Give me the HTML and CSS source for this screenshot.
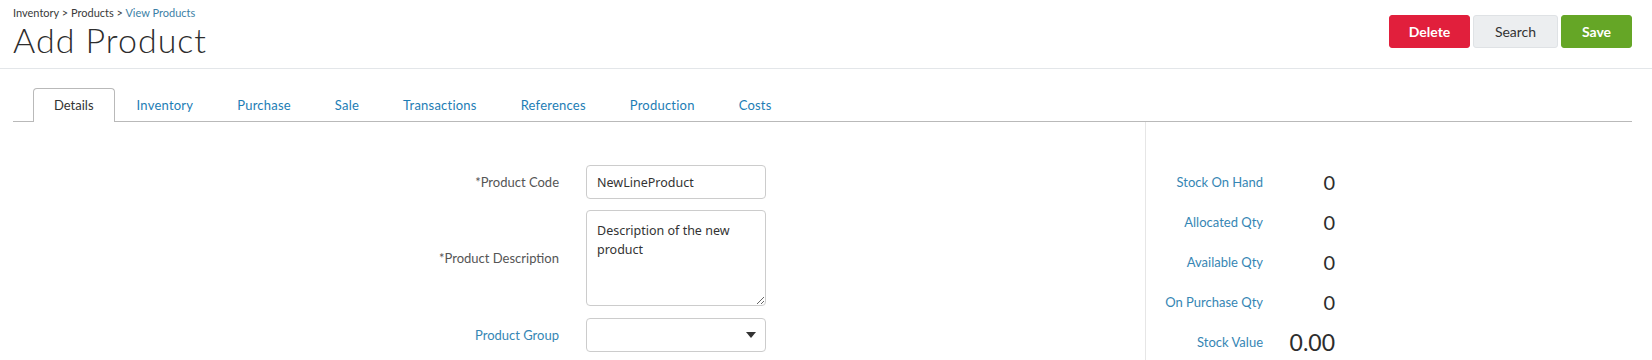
FILE: index.html
```html
<!DOCTYPE html>
<html lang="en">
<head>
<meta charset="utf-8">
<title>Add Product</title>
<link rel="stylesheet" href="styles.css">
</head>
<body>
<div class="page">
  <header class="topbar">
    <div class="titles">
      <nav class="crumbs"><span>Inventory</span> &gt; <span>Products</span> &gt; <a class="crumb-link">View Products</a></nav>
      <h1 class="title">Add Product</h1>
    </div>
    <div class="actions">
      <button class="btn btn-delete">Delete</button>
      <button class="btn btn-search">Search</button>
      <button class="btn btn-save">Save</button>
    </div>
  </header>

  <div class="content">
    <ul class="tabs">
      <li class="tab active"><a>Details</a></li>
      <li class="tab"><a>Inventory</a></li>
      <li class="tab"><a>Purchase</a></li>
      <li class="tab"><a>Sale</a></li>
      <li class="tab"><a>Transactions</a></li>
      <li class="tab"><a>References</a></li>
      <li class="tab"><a>Production</a></li>
      <li class="tab"><a>Costs</a></li>
    </ul>

    <div class="panes">
      <form class="details">
        <label class="flabel">*Product Code</label>
        <input class="field" type="text" value="NewLineProduct">

        <label class="flabel">*Product Description</label>
        <textarea class="field area">Description of the new product</textarea>

        <label class="flabel link">Product Group</label>
        <div class="select-wrap">
          <div class="field select"></div>
          <svg class="caret" width="10" height="6" viewBox="0 0 10 6"><path d="M0 0h10L5 6z" fill="#333"/></svg>
        </div>
      </form>

      <aside class="stock">
        <div class="slabel">Stock On Hand</div><div class="sval">0</div>
        <div class="slabel">Allocated Qty</div><div class="sval">0</div>
        <div class="slabel">Available Qty</div><div class="sval">0</div>
        <div class="slabel">On Purchase Qty</div><div class="sval">0</div>
        <div class="slabel">Stock Value</div><div class="sval big">0.00</div>
      </aside>
    </div>
  </div>
</div>
</body>
</html>
```

FILE: styles.css
```css
html, body {
  margin: 0;
  padding: 0;
  background: #fff;
}

body {
  font-family: "Lato", "Liberation Sans", sans-serif;
  color: #333;
}

.topbar {
  display: flex;
  justify-content: space-between;
  align-items: flex-start;
  height: 68px;
  padding: 0 20px 0 13px;
  border-bottom: 1px solid #e3e6e9;
}

.crumbs {
  padding-top: 5px;
  font-size: 11px;
  line-height: 15px;
  color: #3a3a3a;
}

.crumb-link {
  color: #3d7fa6;
}

.title {
  margin: 0;
  font-size: 34px;
  line-height: 40px;
  font-weight: 300;
  letter-spacing: 1px;
  color: #2d2d2d;
}

.actions {
  display: flex;
  gap: 3px;
  padding-top: 15px;
}

.btn {
  height: 33px;
  border: 1px solid transparent;
  border-radius: 3px;
  font-family: "Lato", "Liberation Sans", sans-serif;
  font-size: 14px;
  font-weight: 700;
  padding: 0;
  color: #fff;
}

.btn-delete {
  width: 81px;
  background: #e11f3c;
  border-color: #e11f3c;
}

.btn-search {
  width: 85px;
  background: #eceef0;
  border-color: #dfe2e5;
  color: #333;
  font-weight: 400;
}

.btn-save {
  width: 71px;
  background: #65a626;
  border-color: #65a626;
}

.content {
  margin: 0 20px 0 13px;
}

.tabs {
  display: flex;
  list-style: none;
  margin: 19px 0 0;
  padding: 0 0 0 20px;
  border-bottom: 1px solid #b9b9b9;
}

.tab a {
  display: block;
  padding: 0 21px;
  line-height: 33px;
  font-size: 13px;
  letter-spacing: 0.22px;
  color: #1d7db5;
  border: 1px solid transparent;
  border-bottom: 0;
  border-radius: 4px 4px 0 0;
  margin-bottom: -1px;
}

.tab.active a {
  color: #333;
  background: #fff;
  border-color: #b9b9b9;
  letter-spacing: 0;
  padding: 0 20px;
}

.panes {
  display: flex;
  min-height: 238px;
}

.details {
  flex: 1;
  display: grid;
  grid-template-columns: 546px 180px;
  column-gap: 27px;
  row-gap: 11px;
  align-items: center;
  align-content: start;
  padding-top: 43px;
}

.flabel {
  text-align: right;
  font-size: 13px;
  color: #555;
}

.flabel.link {
  color: #3686b4;
  margin-top: 1px;
}

.field {
  box-sizing: border-box;
  width: 180px;
  height: 34px;
  margin: 0;
  padding: 0 10px;
  border: 1px solid #ccc;
  border-radius: 4px;
  font-family: "Noto Sans", "Open Sans", sans-serif;
  font-size: 12.5px;
  color: #333;
  background: #fff;
  outline: none;
}

.area {
  height: 96px;
  padding: 10px 10px;
  line-height: 19px;
  resize: both;
}

.select-wrap {
  position: relative;
  margin-top: 1px;
}

.caret {
  position: absolute;
  right: 10px;
  top: 14px;
}

.stock {
  width: 486px;
  border-left: 1px solid #e6e6e6;
  display: grid;
  grid-template-columns: 117px 72px;
  grid-auto-rows: 40px;
  align-items: center;
  align-content: start;
  padding-top: 40px;
}

.slabel {
  text-align: right;
  font-size: 13px;
  color: #3686b4;
}

.sval {
  text-align: right;
  font-size: 20px;
  font-weight: 400;
  color: #2d2d2d;
}

.sval.big {
  font-size: 23px;
}
```
